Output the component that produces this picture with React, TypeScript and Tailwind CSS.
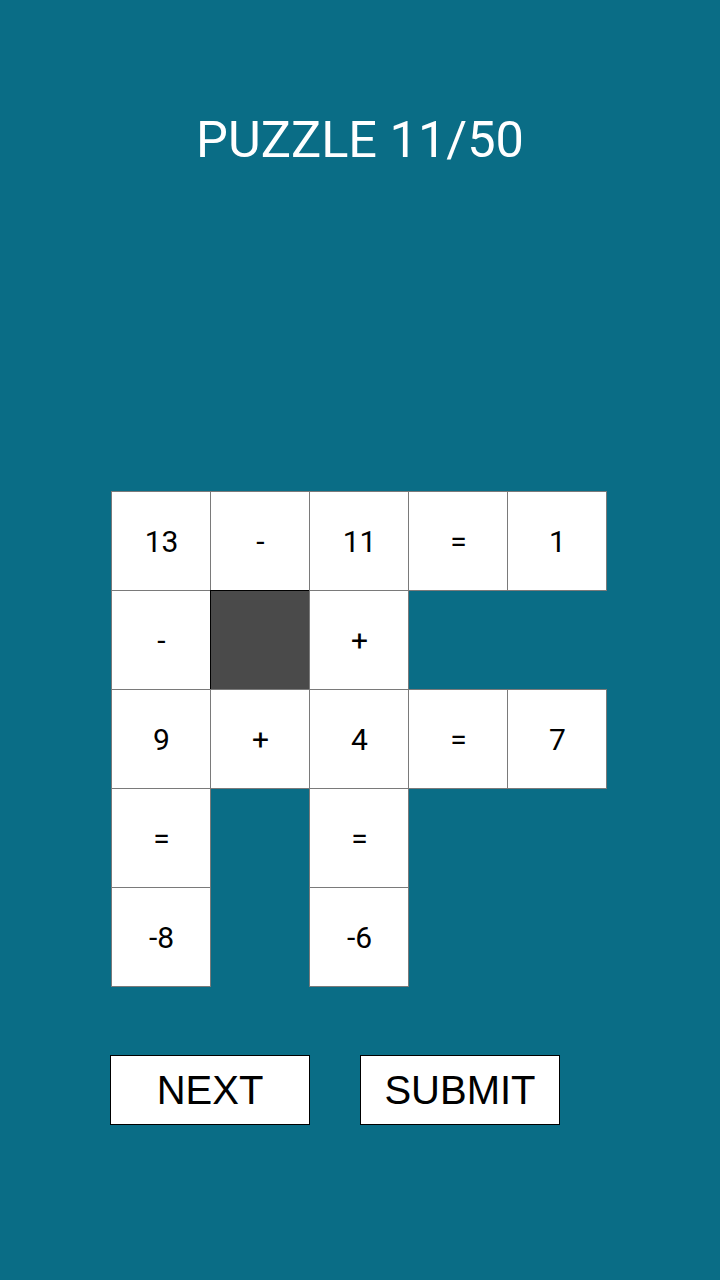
import React from 'react';

type Cell = { r: number; c: number; v: string; dark?: boolean };

const cells: Cell[] = [
  { r: 1, c: 1, v: '13' },
  { r: 1, c: 2, v: '-' },
  { r: 1, c: 3, v: '11' },
  { r: 1, c: 4, v: '=' },
  { r: 1, c: 5, v: '1' },
  { r: 2, c: 1, v: '-' },
  { r: 2, c: 2, v: '', dark: true },
  { r: 2, c: 3, v: '+' },
  { r: 3, c: 1, v: '9' },
  { r: 3, c: 2, v: '+' },
  { r: 3, c: 3, v: '4' },
  { r: 3, c: 4, v: '=' },
  { r: 3, c: 5, v: '7' },
  { r: 4, c: 1, v: '=' },
  { r: 4, c: 3, v: '=' },
  { r: 5, c: 1, v: '-8' },
  { r: 5, c: 3, v: '-6' },
];

const rowClass = ['', 'row-start-1', 'row-start-2', 'row-start-3', 'row-start-4', 'row-start-5'];
const colClass = ['', 'col-start-1', 'col-start-2', 'col-start-3', 'col-start-4', 'col-start-5'];

export default function App() {
  return (
    <div className="flex min-h-[1280px] w-full flex-col bg-[#0a6d86] font-['Roboto',sans-serif]">
      <h1 className="mt-[110px] self-center text-[50.5px] leading-[60px] text-white">PUZZLE 11/50</h1>

      <div className="ml-[111px] mt-[321px] grid grid-cols-[repeat(5,99px)] grid-rows-[repeat(5,99px)] self-start">
        {cells.map((cell) => (
          <div
            key={`${cell.r}-${cell.c}`}
            className={`${rowClass[cell.r]} ${colClass[cell.c]} flex h-[100px] w-[100px] items-center justify-center border pl-[1px] text-[30px] text-black ${
              cell.dark
                ? 'border-t-black border-l-black border-r-[#7a7a7a] border-b-[#7a7a7a] bg-[#4a4a4a]'
                : 'border-[#7a7a7a] bg-white'
            }`}
          >
            {cell.v}
          </div>
        ))}
      </div>

      <div className="ml-[110px] mt-[69px] flex gap-[50px] self-start font-['Liberation_Sans',Arial,sans-serif]">
        <button className="flex h-[70px] w-[200px] items-center justify-center border border-black bg-white text-[40px] text-black">
          NEXT
        </button>
        <button className="flex h-[70px] w-[200px] items-center justify-center border border-black bg-white text-[40px] text-black">
          SUBMIT
        </button>
      </div>
    </div>
  );
}
